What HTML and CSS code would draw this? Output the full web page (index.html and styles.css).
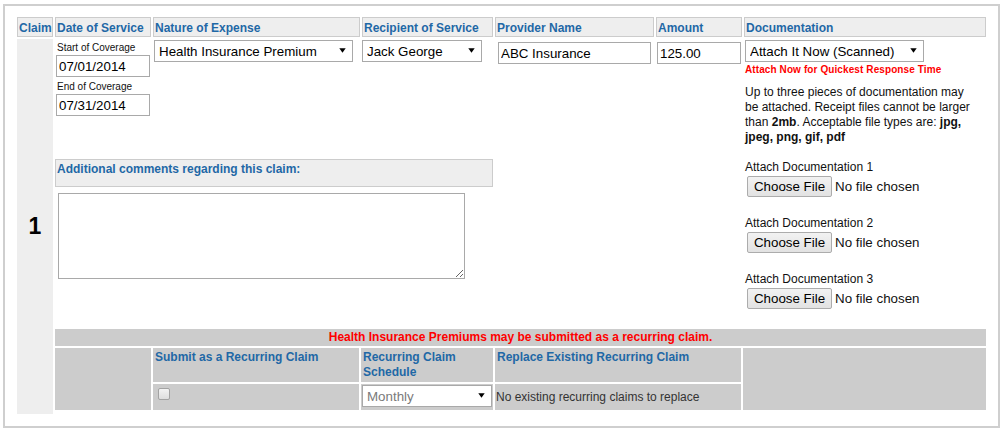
FILE: index.html
```html
<!DOCTYPE html>
<html lang="en">
<head>
<meta charset="utf-8">
<title>Claim</title>
<link rel="stylesheet" href="styles.css">
</head>
<body>
<div class="panel">
  <div class="claims">
    <div class="th">Claim</div>
    <div class="th">Date of Service</div>
    <div class="th">Nature of Expense</div>
    <div class="th">Recipient of Service</div>
    <div class="th">Provider Name</div>
    <div class="th">Amount</div>
    <div class="th">Documentation</div>

    <div class="claim-no">1</div>

    <div class="date-cell">
      <div class="small-label first">Start of Coverage</div>
      <input class="text date-input" type="text" value="07/01/2014">
      <div class="small-label second">End of Coverage</div>
      <input class="text date-input" type="text" value="07/31/2014">
    </div>

    <div class="nature-cell">
      <span class="sel">
        <select class="select w-nature"><option>Health Insurance Premium</option></select>
        <svg class="arrow" width="7" height="5" viewBox="0 0 7 5"><polygon points="0.3,0.3 6.7,0.3 3.5,4.8" fill="#000"/></svg>
      </span>
    </div>

    <div class="recip-cell">
      <span class="sel">
        <select class="select w-recip"><option>Jack George</option></select>
        <svg class="arrow" width="7" height="5" viewBox="0 0 7 5"><polygon points="0.3,0.3 6.7,0.3 3.5,4.8" fill="#000"/></svg>
      </span>
    </div>

    <div class="prov-cell">
      <input class="text prov-input" type="text" value="ABC Insurance">
    </div>

    <div class="amt-cell">
      <input class="text amt-input" type="text" value="125.00">
    </div>

    <div class="doc-cell">
      <span class="sel">
        <select class="select w-doc"><option>Attach It Now (Scanned)</option></select>
        <svg class="arrow" width="7" height="5" viewBox="0 0 7 5"><polygon points="0.3,0.3 6.7,0.3 3.5,4.8" fill="#000"/></svg>
      </span>
      <div class="red-note">Attach Now for Quickest Response Time</div>
      <p class="doc-info">Up to three pieces of documentation may<br>be attached. Receipt files cannot be larger<br>than <b>2mb</b>. Acceptable file types are: <b>jpg,</b><br><b>jpeg, png, gif, pdf</b></p>

      <div class="attach-label first">Attach Documentation 1</div>
      <div class="file-row"><button class="file-btn" type="button">Choose File</button><span class="file-none">No file chosen</span></div>

      <div class="attach-label">Attach Documentation 2</div>
      <div class="file-row"><button class="file-btn" type="button">Choose File</button><span class="file-none">No file chosen</span></div>

      <div class="attach-label">Attach Documentation 3</div>
      <div class="file-row"><button class="file-btn" type="button">Choose File</button><span class="file-none">No file chosen</span></div>
    </div>

    <div class="comments">
      <div class="comments-head">Additional comments regarding this claim:</div>
      <textarea class="comments-box"></textarea>
    </div>

    <div class="recurring">
      <div class="rc-notice">Health Insurance Premiums may be submitted as a recurring claim.</div>
      <div class="rc-blank"></div>
      <div class="rc-head">Submit as a Recurring Claim</div>
      <div class="rc-head">Recurring Claim Schedule</div>
      <div class="rc-head">Replace Existing Recurring Claim</div>
      <div class="rc-end"></div>
      <div class="rc-cell"><input class="check" type="checkbox"></div>
      <div class="rc-cell">
        <span class="sel sel-monthly">
          <select class="select w-monthly"><option>Monthly</option></select>
          <svg class="arrow" width="7" height="5" viewBox="0 0 7 5"><polygon points="0.3,0.3 6.7,0.3 3.5,4.8" fill="#000"/></svg>
        </span>
      </div>
      <div class="rc-cell rc-text">No existing recurring claims to replace</div>
    </div>
  </div>
</div>
</body>
</html>
```

FILE: styles.css
```css
* { box-sizing: border-box; }

html, body { background: #fff; }

body {
  margin: 0;
  font-family: "Liberation Sans", Arial, sans-serif;
  color: #222;
}

.panel {
  width: 997px;
  height: 424px;
  margin: 4px 0 0 3px;
  border: 2px solid #cfcfcf;
  padding: 11px 12px 12px 12px;
}

.claims {
  display: grid;
  grid-template-columns: 36px 96px 207px 131px 159px 86px 242px;
  grid-template-rows: 20px 118px 168px 85px;
  gap: 2px;
}

.th {
  background: #eeeeee;
  border: 1px solid #cccccc;
  padding: 3px 1px 0 1px;
  font-size: 12px;
  line-height: 15px;
  font-weight: bold;
  color: #1f68a6;
  white-space: nowrap;
  overflow: hidden;
}

.claim-no {
  grid-column: 1;
  grid-row: 2 / 5;
  background: #eeeeee;
  display: flex;
  align-items: center;
  justify-content: center;
  font-size: 23px;
  font-weight: bold;
  color: #000;
}

/* date column */
.date-cell { grid-column: 2; grid-row: 2; padding-top: 1px; }

.small-label {
  font-size: 10px;
  line-height: 15px;
  color: #111;
  padding-left: 2px;
}
.small-label.second { margin-top: 2px; }

.text {
  display: block;
  height: 22px;
  border: 1px solid #a9a9a9;
  border-radius: 0;
  padding: 1px 2px;
  font-family: "Liberation Sans", Arial, sans-serif;
  font-size: 13.333px;
  color: #000;
  background: #fff;
  outline: none;
}

.date-input { width: 94px; margin-left: 1px; }

/* selects */
.sel {
  position: relative;
  display: block;
  width: fit-content;
}

.select {
  display: block;
  -webkit-appearance: none;
  appearance: none;
  height: 22px;
  border: 1px solid #a9a9a9;
  border-radius: 0;
  background: #fff;
  padding: 0 18px 0 4px;
  font-family: "Liberation Sans", Arial, sans-serif;
  font-size: 13.333px;
  color: #000;
  outline: none;
}

.arrow {
  position: absolute;
  right: 7px;
  top: 8px;
  pointer-events: none;
}

.nature-cell { grid-column: 3; grid-row: 2; padding: 1px 0 0 1px; }
.w-nature { width: 199px; }

.recip-cell { grid-column: 4; grid-row: 2; padding-top: 1px; }
.w-recip { width: 120px; }

.prov-cell { grid-column: 5; grid-row: 2; padding: 3px 0 0 3px; }
.prov-input { width: 153px; }

.amt-cell { grid-column: 6; grid-row: 2; padding: 3px 0 0 1px; }
.amt-input { width: 84px; }

/* documentation column */
.doc-cell { grid-column: 7; grid-row: 2 / 4; padding: 1px 0 0 1px; }
.w-doc { width: 179px; }

.red-note {
  margin-top: 2px;
  font-size: 10px;
  line-height: 12px;
  font-weight: bold;
  letter-spacing: 0.1px;
  color: #ff0000;
}

.doc-info {
  margin: 9px 0 0 0;
  width: 238px;
  font-size: 12px;
  line-height: 15px;
  color: #111;
  white-space: nowrap;
}

.attach-label {
  margin-top: 19px;
  font-size: 12px;
  line-height: 15px;
  color: #111;
}
.attach-label.first { margin-top: 15px; }

.file-row {
  display: flex;
  align-items: center;
  height: 21px;
  margin: 1px 0 0 2px;
}

.file-btn {
  width: 85px;
  height: 21px;
  padding: 0;
  border: 1px solid #acacac;
  border-radius: 2px;
  background: linear-gradient(#f2f2f2, #e2e2e2);
  font-family: "Liberation Sans", Arial, sans-serif;
  font-size: 13.333px;
  color: #000;
}

.file-none {
  margin-left: 3px;
  font-size: 13.333px;
  color: #111;
}

/* comments */
.comments { grid-column: 2 / 5; grid-row: 3; }

.comments-head {
  height: 28px;
  background: #eeeeee;
  border: 1px solid #cccccc;
  padding: 2px 1px 0 1px;
  font-size: 12px;
  line-height: 15px;
  font-weight: bold;
  color: #1f68a6;
}

.comments-box {
  display: block;
  margin: 6px 0 0 3px;
  width: 407px;
  height: 86px;
  border: 1px solid #a9a9a9;
  border-radius: 0;
  resize: both;
  font-family: "Liberation Sans", Arial, sans-serif;
  font-size: 13.333px;
  outline: none;
}

/* recurring */
.recurring {
  grid-column: 2 / 8;
  grid-row: 4;
  display: grid;
  grid-template-columns: 96px 206px 132px 246px 243px;
  grid-template-rows: 17px 34px 26px;
  gap: 2px;
  align-content: start;
}

.rc-notice {
  grid-column: 1 / 6;
  background: #cccccc;
  color: #ff0000;
  font-weight: bold;
  font-size: 12px;
  line-height: 17px;
  text-align: center;
}

.rc-blank { grid-column: 1; grid-row: 2 / 4; background: #cccccc; }
.rc-end { grid-column: 5; grid-row: 2 / 4; background: #cccccc; }

.rc-head {
  background: #cccccc;
  color: #1f68a6;
  font-weight: bold;
  font-size: 12px;
  line-height: 15px;
  padding: 2px 2px 0 2px;
}

.rc-cell { background: #cccccc; }

.check {
  display: block;
  -webkit-appearance: none;
  appearance: none;
  width: 12px;
  height: 12px;
  margin: 4px 0 0 5px;
  border: 1px solid #a3a3a3;
  border-radius: 2px;
  background: linear-gradient(#f3f3f3, #dedede);
}

.sel-monthly { margin: 1px 0 0 1px; }
.w-monthly { width: 130px; color: #7a7a7a; }

.rc-text {
  display: flex;
  align-items: center;
  padding-left: 1px;
  font-size: 12px;
  line-height: 15px;
  color: #333;
}
```
